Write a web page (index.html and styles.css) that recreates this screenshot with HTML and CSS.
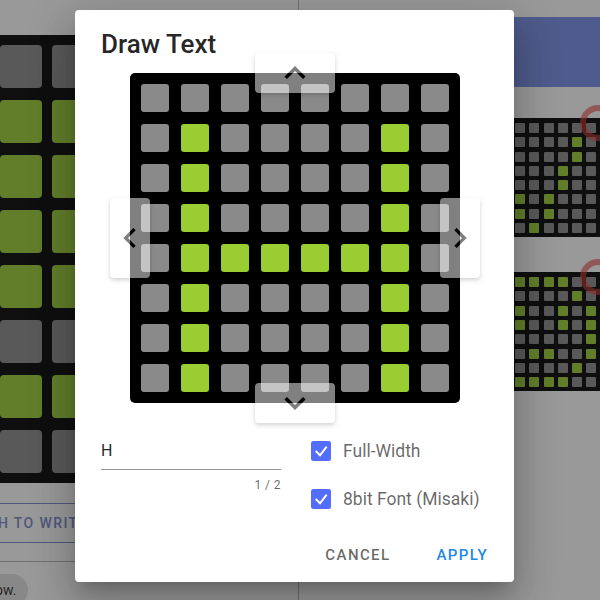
FILE: index.html
```html
<!DOCTYPE html>
<html lang="en">

<head>
    <meta charset="UTF-8">
    <meta name="viewport" content="width=device-width, initial-scale=1.0">
    <title>Draw Text</title>
    <link rel="stylesheet" href="styles.css">
</head>

<body>
    <div class="app">
        <section class="editor">
            <div class="matrix big" data-rows="00000 11000 11000 11000 11000 00000 11000 00000"></div>
            <button class="touch-btn">Touch to write</button>
            <div class="divider"></div>
            <div class="chips"><span class="chip">Show.</span></div>
        </section>

        <section class="saved">
            <div class="toolbar"></div>
            <div class="saved-item">
                <div class="matrix mini" data-rows="0000000000000000 0000000000000010 0000000000000010 0000000000000100 0000000000000100 0000000000101000 0000000000101000 0000000000010000"></div>
                <span class="remove"></span>
            </div>
            <div class="saved-item">
                <div class="matrix mini" data-rows="0000000000111100 0000000000000010 0000000000100101 0000000000100101 0000000000000001 0000000000011001 0000000000000010 0000000000111100"></div>
                <span class="remove"></span>
            </div>
        </section>
    </div>

    <div class="scrim"></div>

    <div class="dialog">
        <h2 class="dialog-title">Draw Text</h2>

        <div class="canvas">
            <div class="matrix draw" data-rows="00000000 01000010 01000010 01000010 01111110 01000010 01000010 01000010"></div>

            <button class="shift up">
                <svg viewBox="0 0 24 24"><path d="M7.41 15.41L12 10.83l4.59 4.58L18 14l-6-6-6 6z"/></svg>
            </button>
            <button class="shift down">
                <svg viewBox="0 0 24 24"><path d="M7.41 8.59L12 13.17l4.59-4.58L18 10l-6 6-6-6z"/></svg>
            </button>
            <button class="shift left">
                <svg viewBox="0 0 24 24"><path d="M15.41 16.59L10.83 12l4.58-4.59L14 6l-6 6 6 6z"/></svg>
            </button>
            <button class="shift right">
                <svg viewBox="0 0 24 24"><path d="M8.59 16.59L13.17 12 8.59 7.41 10 6l6 6-6 6z"/></svg>
            </button>
        </div>

        <div class="options">
            <div class="text-field">
                <div class="field-input">H</div>
                <div class="counter">1 / 2</div>
            </div>

            <div class="checks">
                <label class="check">
                    <svg viewBox="0 0 20 20"><rect width="20" height="20" rx="2.5"/><path d="M4.7 10l4.3 4.3 6.7-8.6"/></svg>
                    <span>Full-Width</span>
                </label>
                <label class="check">
                    <svg viewBox="0 0 20 20"><rect width="20" height="20" rx="2.5"/><path d="M4.7 10l4.3 4.3 6.7-8.6"/></svg>
                    <span>8bit Font (Misaki)</span>
                </label>
            </div>
        </div>

        <div class="actions">
            <button class="btn">Cancel</button>
            <button class="btn primary">Apply</button>
        </div>
    </div>

    <script>
        // build the led cells from the row strings
        document.querySelectorAll('.matrix').forEach(matrix => {
            matrix.dataset.rows.split(' ').forEach(row => {
                for (const bit of row) {
                    const cell = document.createElement('i');
                    if (bit === '1') cell.className = 'on';
                    matrix.appendChild(cell);
                }
            });
        });
    </script>
</body>

</html>
```

FILE: styles.css
```css
html,
body {
    margin: 0;
    padding: 0;
}

body {
    position: relative;
    width: 600px;
    height: 600px;
    overflow: hidden;
    background: #fff;
    font-family: Roboto, "Noto Sans", sans-serif;
}

.app {
    display: flex;
    height: 600px;
}

/* page behind the dialog */
.editor {
    flex: none;
    width: 298px;
    padding-top: 35px;
    overflow: hidden;
}

.saved {
    flex: 1;
    display: flex;
    flex-direction: column;
    padding-top: 17px;
    border-left: 1px solid rgba(0, 0, 0, .3);
    overflow: hidden;
}

.matrix {
    display: grid;
    width: max-content;
    background: #000;
}

.matrix i {
    display: block;
    background: #8a8a8a;
}

.matrix i.on {
    background: #9acd32;
}

.big {
    grid-template-columns: repeat(5, 42px);
    grid-auto-rows: 43px;
    column-gap: 10px;
    row-gap: 12px;
    padding: 10px;
    margin-left: -10px;
}

.big i {
    border-radius: 4px;
}

.touch-btn {
    display: flex;
    align-items: center;
    width: 400px;
    height: 40px;
    margin: 20px 0 0 -60px;
    padding: 0 0 0 15px;
    border: 1px solid #7986cb;
    border-radius: 4px;
    background: none;
    color: #7986cb;
    font: 500 14px Roboto, sans-serif;
    letter-spacing: 1.4px;
    text-transform: uppercase;
}

.divider {
    margin-top: 18px;
    border-top: 1px solid rgba(0, 0, 0, .3);
}

.chips {
    padding-top: 12px;
}

.chip {
    display: inline-flex;
    align-items: center;
    height: 32px;
    padding: 0 12px;
    margin-left: -33px;
    border-radius: 16px;
    background: #e0e0e0;
    color: rgba(0, 0, 0, .87);
    font-size: 14px;
}

.toolbar {
    flex: none;
    height: 70px;
    margin-bottom: 31px;
    background: #768ce7;
}

.saved-item {
    position: relative;
}

.saved-item + .saved-item {
    margin-top: 35px;
}

.mini {
    grid-template-columns: repeat(16, 10px);
    grid-auto-rows: 10px;
    gap: 4.3px;
    padding: 5px 5px 4px;
    margin-left: 68px;
}

.mini i {
    border-radius: 1px;
}

.remove {
    position: absolute;
    left: 281px;
    top: -13px;
    width: 36px;
    height: 36px;
    box-sizing: border-box;
    border: 6px solid rgba(229, 57, 53, .6);
    border-radius: 50%;
}

.scrim {
    position: absolute;
    inset: 0;
    background: #212121;
    opacity: .46;
}

/* dialog */
.dialog {
    position: absolute;
    left: 75px;
    top: 10px;
    width: 439px;
    height: 572px;
    display: flex;
    flex-direction: column;
    background: #fff;
    border-radius: 4px;
    box-shadow: 0 11px 15px -7px rgba(0, 0, 0, .2), 0 24px 38px 3px rgba(0, 0, 0, .14), 0 9px 46px 8px rgba(0, 0, 0, .12);
}

.dialog-title {
    margin: 18px 0 0;
    padding: 0 26px;
    font-size: 26px;
    line-height: 32px;
    font-weight: 500;
    color: rgba(0, 0, 0, .87);
}

.canvas {
    position: relative;
    width: 330px;
    height: 330px;
    margin: 13px auto 0;
}

.draw {
    grid-template-columns: repeat(8, 28px);
    grid-auto-rows: 28px;
    gap: 12px;
    padding: 11px;
    border-radius: 5px;
}

.draw i {
    border-radius: 3px;
}

.shift {
    position: absolute;
    display: flex;
    align-items: center;
    justify-content: center;
    padding: 0;
    border: 0;
    border-radius: 4px;
    background: #fff;
    opacity: .5;
    box-shadow: 0 2px 4px rgba(0, 0, 0, .35);
}

.shift svg {
    width: 42px;
    height: 42px;
    fill: #000;
}

.shift.up,
.shift.down {
    left: 125px;
    width: 80px;
    height: 40px;
}

.shift.up {
    top: -20px;
}

.shift.down {
    bottom: -20px;
}

.shift.left,
.shift.right {
    top: 125px;
    width: 40px;
    height: 80px;
}

.shift.left {
    left: -20px;
}

.shift.right {
    right: -20px;
}

.options {
    display: flex;
    gap: 30px;
    margin-top: 36px;
    padding: 0 26px;
}

.text-field {
    width: 180px;
}

.field-input {
    padding-bottom: 6px;
    border-bottom: 1px solid rgba(0, 0, 0, .42);
    font-size: 16px;
    line-height: 24px;
    color: rgba(0, 0, 0, .87);
}

.counter {
    margin-top: 9px;
    text-align: right;
    font-size: 12px;
    line-height: 12px;
    letter-spacing: .4px;
    color: rgba(0, 0, 0, .6);
}

.checks {
    display: flex;
    flex-direction: column;
    gap: 23.5px;
}

.check {
    display: flex;
    align-items: center;
    gap: 12px;
    height: 24px;
    font-size: 17.5px;
    color: rgba(0, 0, 0, .6);
}

.check svg {
    width: 20px;
    height: 20px;
}

.check rect {
    fill: #536dfe;
}

.check path {
    fill: none;
    stroke: #fff;
    stroke-width: 2;
}

.actions {
    display: flex;
    justify-content: flex-end;
    gap: 14px;
    margin-top: auto;
    padding: 0 10px 9px;
}

.btn {
    height: 36px;
    padding: 0 16px;
    border: 0;
    background: none;
    font: 500 15px Roboto, sans-serif;
    letter-spacing: 1.4px;
    text-transform: uppercase;
    color: rgba(0, 0, 0, .6);
}

.btn.primary {
    color: #1e88e5;
}
```
